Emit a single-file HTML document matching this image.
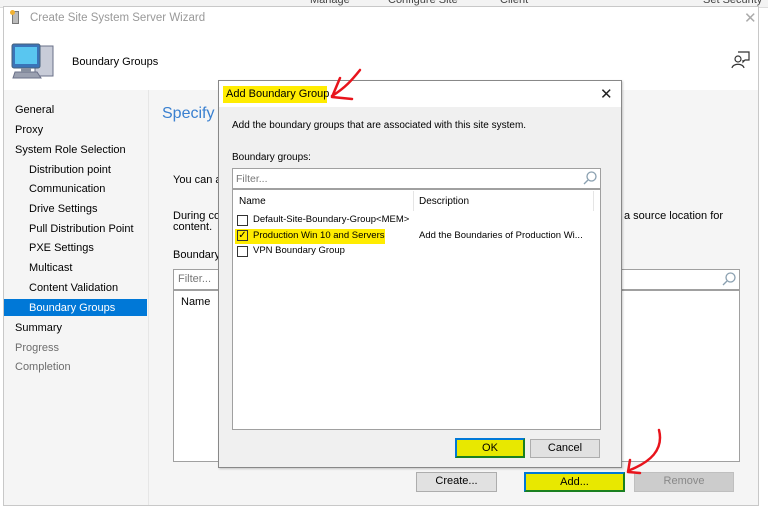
<!DOCTYPE html>
<html><head><style>
*{margin:0;padding:0;box-sizing:border-box}
body{width:768px;height:505px;overflow:hidden;background:#fff;font-family:"Liberation Sans",sans-serif;font-size:11px;color:#000;position:relative}
.a{position:absolute;white-space:nowrap}
.btn{position:absolute;background:#e1e1e1;border:1px solid #adadad;text-align:center;font-size:11px;line-height:17px}
</style></head><body>
<div class="a" style="left:0;top:0;width:768px;height:8px;background:#f3f3f3;border-bottom:1px solid #ddd"></div>
<div class="a" style="left:310px;top:-6px;font-size:11px;color:#444">Manage</div>
<div class="a" style="left:388px;top:-6px;color:#444">Configure Site</div>
<div class="a" style="left:500px;top:-6px;color:#444">Client</div>
<div class="a" style="left:703px;top:-6px;color:#444">Set Security</div>
<div class="a" style="left:3px;top:6px;width:756px;height:500px;background:#fff;border:1px solid #c8c8c8"></div>
<div class="a" style="left:12px;top:11px;width:7px;height:13px;background:#bbb;border:1px solid #777"></div>
<div class="a" style="left:10px;top:10px;width:5px;height:5px;background:#f0b030;border-radius:50%"></div>
<div class="a" style="left:30px;top:12px;font-size:11.5px;color:#999">Create Site System Server Wizard</div>
<div class="a" style="left:744px;top:9px;font-size:15px;color:#aaa">✕</div>
<svg class="a" style="left:11px;top:42px" width="46" height="40" viewBox="0 0 46 40">
<rect x="24" y="4" width="18" height="30" fill="#c8ccd8" stroke="#6a7088"/>
<rect x="1" y="2" width="28" height="24" rx="2" fill="#3a74b8" stroke="#46607a"/>
<rect x="4" y="5" width="22" height="17" fill="#59c6f0"/>
<path d="M4 30 L26 30 L30 36 L2 36 Z" fill="#9aa0b0" stroke="#6a7088"/>
<rect x="10" y="26" width="10" height="4" fill="#8890a0"/>
</svg>
<div class="a" style="left:72px;top:56px;font-size:11px">Boundary Groups</div>
<svg class="a" style="left:730px;top:49px" width="22" height="22" viewBox="0 0 22 22" fill="none" stroke="#333" stroke-width="1.2">
<path d="M8 3 H19 V11 H15 L13 13 V11"/><circle cx="8" cy="10" r="3"/><path d="M2 19 C3 14 13 14 14 19"/>
</svg>
<div class="a" style="left:4px;top:90px;width:754px;height:415px;background:#f5f5f5"></div>
<div class="a" style="left:148px;top:90px;width:1px;height:415px;background:#e6e6e6"></div>
<div class="a" style="left:4px;top:299px;width:143px;height:17px;background:#0078d7"></div>
<div class="a" style="left:15px;top:104px">General</div>
<div class="a" style="left:15px;top:124px">Proxy</div>
<div class="a" style="left:15px;top:144px">System Role Selection</div>
<div class="a" style="left:29px;top:164px">Distribution point</div>
<div class="a" style="left:29px;top:183px">Communication</div>
<div class="a" style="left:29px;top:203px">Drive Settings</div>
<div class="a" style="left:29px;top:223px">Pull Distribution Point</div>
<div class="a" style="left:29px;top:242px">PXE Settings</div>
<div class="a" style="left:29px;top:262px">Multicast</div>
<div class="a" style="left:29px;top:282px">Content Validation</div>
<div class="a" style="left:29px;top:302px;color:#fff">Boundary Groups</div>
<div class="a" style="left:15px;top:322px">Summary</div>
<div class="a" style="left:15px;top:342px;color:#6d6d6d">Progress</div>
<div class="a" style="left:15px;top:361px;color:#6d6d6d">Completion</div>
<div class="a" style="left:162px;top:105px;font-size:16px;color:#3a80d0">Specify t</div>
<div class="a" style="left:173px;top:174px">You can a</div>
<div class="a" style="left:173px;top:210px">During co</div>
<div class="a" style="left:173px;top:221px">content.</div>
<div class="a" style="left:624px;top:210px">a source location for</div>
<div class="a" style="left:173px;top:249px">Boundary g</div>
<div class="a" style="left:173px;top:269px;width:567px;height:21px;background:#fff;border:1px solid #a0a0a0"></div>
<div class="a" style="left:178px;top:273px;color:#777">Filter...</div>
<svg class="a" style="left:721px;top:271px" width="16" height="16" viewBox="0 0 16 16" fill="none" stroke="#8aa0b0" stroke-width="1.3"><circle cx="9.5" cy="6.5" r="4.5"/><path d="M6 10 L2 14"/></svg>
<div class="a" style="left:173px;top:290px;width:567px;height:172px;background:#fff;border:1px solid #a0a0a0"></div>
<div class="a" style="left:181px;top:296px">Name</div>
<div class="btn" style="left:416px;top:472px;width:81px;height:20px">Create...</div>
<div class="btn" style="left:524px;top:472px;width:101px;height:20px;background:#e8e800;border:2px solid #0078d7;border-right-color:#1a8020;border-bottom-color:#1a8020">Add...</div>
<div class="btn" style="left:634px;top:472px;width:100px;height:20px;background:#ccc;border-color:#bfbfbf;color:#888">Remove</div>
<div class="a" style="left:218px;top:80px;width:404px;height:388px;background:#f0f0f0;border:1px solid #888;box-shadow:1px 1px 2px rgba(0,0,0,.2)"></div>
<div class="a" style="left:219px;top:81px;width:402px;height:26px;background:#fff"></div>
<div class="a" style="left:223px;top:86px;width:104px;height:17px;background:#ffec00"></div>
<div class="a" style="left:226px;top:88px;font-size:11px">Add Boundary Group</div>
<div class="a" style="left:600px;top:85px;font-size:15px;color:#222">✕</div>
<div class="a" style="left:232px;top:120px;font-size:10px">Add the boundary groups that are associated with this site system.</div>
<div class="a" style="left:232px;top:152px;font-size:10px">Boundary groups:</div>
<div class="a" style="left:232px;top:168px;width:369px;height:21px;background:#fff;border:1px solid #a0a0a0"></div>
<div class="a" style="left:236px;top:173px;color:#777;font-size:10.5px">Filter...</div>
<svg class="a" style="left:582px;top:170px" width="16" height="16" viewBox="0 0 16 16" fill="none" stroke="#8aa0b0" stroke-width="1.3"><circle cx="9.5" cy="6.5" r="4.5"/><path d="M6 10 L2 14"/></svg>
<div class="a" style="left:232px;top:189px;width:369px;height:241px;background:#fff;border:1px solid #a0a0a0"></div>
<div class="a" style="left:413px;top:191px;width:1px;height:20px;background:#e5e5e5"></div>
<div class="a" style="left:593px;top:191px;width:1px;height:20px;background:#e5e5e5"></div>
<div class="a" style="left:239px;top:196px;font-size:10px">Name</div>
<div class="a" style="left:419px;top:196px;font-size:10px">Description</div>
<div class="a" style="left:237px;top:215px;width:11px;height:11px;border:1px solid #333;background:#fff"></div>
<div class="a" style="left:253px;top:214px;font-size:9.5px">Default-Site-Boundary-Group&lt;MEM&gt;</div>
<div class="a" style="left:235px;top:229px;width:150px;height:15px;background:#ffec00"></div>
<div class="a" style="left:237px;top:230px;width:11px;height:11px;border:1px solid #333;font-size:10px;line-height:9px;text-align:center">✓</div>
<div class="a" style="left:253px;top:230px;font-size:9.5px">Production Win 10 and Servers</div>
<div class="a" style="left:419px;top:230px;font-size:9.5px">Add the Boundaries of Production Wi...</div>
<div class="a" style="left:237px;top:246px;width:11px;height:11px;border:1px solid #333;background:#fff"></div>
<div class="a" style="left:253px;top:245px;font-size:9.5px">VPN Boundary Group</div>
<div class="btn" style="left:455px;top:438px;width:70px;height:20px;background:#e8e800;border:2px solid #0078d7;border-right-color:#1a8020;border-bottom-color:#1a8020;line-height:16px">OK</div>
<div class="btn" style="left:530px;top:439px;width:70px;height:19px;line-height:17px">Cancel</div>
<svg class="a" style="left:0;top:0" width="768" height="505" fill="none" stroke="#e8141c" stroke-width="2.5" stroke-linecap="round" stroke-linejoin="round">
<path d="M360 70 C352 80 345 88 332 96"/><path d="M340 78 L332 97 L352 99"/>
<path d="M659 430 C664 450 650 462 630 470"/><path d="M630 460 L628 472 L640 473"/>
</svg>
</body></html>
